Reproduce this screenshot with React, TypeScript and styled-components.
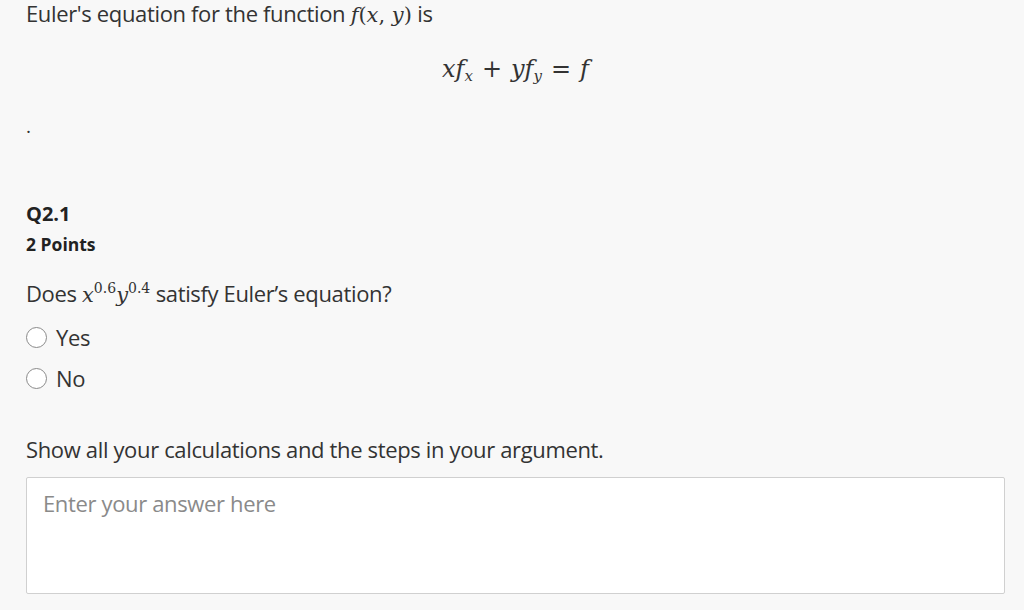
import styled, { createGlobalStyle } from 'styled-components';

const GlobalStyle = createGlobalStyle`
  html, body {
    margin: 0;
    padding: 0;
    background: #f8f8f8;
  }
  body {
    font-family: "Open Sans", "Noto Sans", sans-serif;
    color: #333;
  }
`;

const Page = styled.div`
  padding: 0 19px 0 26px;
  width: 1024px;
  box-sizing: border-box;
`;

const Prompt = styled.p`
  margin: 0;
  font-size: 22px;
  letter-spacing: -0.35px;
  line-height: 30px;
`;

const Lead = styled(Prompt)`
  line-height: 26px;
`;

const M = styled.span<{ $size?: number }>`
  font-family: "DejaVu Serif", "Liberation Serif", serif;
  font-style: italic;
  font-size: ${(p) => p.$size ?? 21}px;
  letter-spacing: 0;
`;

const Up = styled.span<{ $size?: number }>`
  font-family: "DejaVu Serif", "Liberation Serif", serif;
  font-style: normal;
  font-size: ${(p) => p.$size ?? 21}px;
  letter-spacing: 0;
`;

const Op = styled(Up)`
  padding: 0 9px;
`;

const Sub = styled.sub`
  font-size: 15px;
  vertical-align: -4px;
`;

const Sup = styled.sup`
  font-family: "DejaVu Serif", "Liberation Serif", serif;
  font-style: normal;
  font-size: 14px;
  letter-spacing: 0;
  vertical-align: 9px;
`;

const Display = styled.div`
  text-align: center;
  margin: 25px 0 0;
  line-height: 32px;
`;

const Dot = styled.div`
  margin-top: 24px;
  font-size: 19px;
  line-height: 20px;
`;

const QTitle = styled.h3`
  margin: 65px 0 0;
  font-size: 20px;
  font-weight: 700;
  line-height: 26px;
  color: #222;
`;

const Points = styled.div`
  font-size: 17.5px;
  font-weight: 700;
  line-height: 22px;
  margin-top: 6px;
  color: #222;
`;

const Question = styled(Prompt)`
  margin-top: 18px;
`;

const Options = styled.div`
  display: flex;
  flex-direction: column;
  gap: 11px;
  margin-top: 12px;
`;

const Option = styled.label`
  display: flex;
  align-items: center;
  gap: 9px;
  font-size: 22px;
  letter-spacing: -0.35px;
  line-height: 30px;
`;

const Radio = styled.span`
  width: 19px;
  height: 19px;
  border-radius: 50%;
  border: 1px solid #8a8a8a;
  background: #fff;
  box-sizing: content-box;
`;

const Instruction = styled(Prompt)`
  margin-top: 41px;
`;

const Answer = styled.textarea`
  display: block;
  margin-top: 13px;
  width: 100%;
  height: 117px;
  box-sizing: border-box;
  border: 1px solid #d0d0d0;
  border-radius: 2px;
  background: #fff;
  padding: 10px 16px;
  font-family: "Open Sans", "Noto Sans", sans-serif;
  font-size: 22px;
  letter-spacing: -0.35px;
  resize: none;
  &::placeholder {
    color: #8a8a8a;
  }
`;

export default function App() {
  return (
    <Page>
      <GlobalStyle />
      <Lead>
        Euler's equation for the function <M>f</M><Up>(</Up><M>x</M><Up>, </Up><M>y</M><Up>)</Up> is
      </Lead>
      <Display>
        <M $size={24}>xf</M><M $size={24}><Sub>x</Sub></M>
        <Op $size={24}>+</Op>
        <M $size={24}>yf</M><M $size={24}><Sub>y</Sub></M>
        <Op $size={24}>=</Op>
        <M $size={24}>f</M>
      </Display>
      <Dot>.</Dot>
      <QTitle>Q2.1</QTitle>
      <Points>2 Points</Points>
      <Question>
        Does <M>x</M><Sup>0.6</Sup><M>y</M><Sup>0.4</Sup> satisfy Euler’s equation?
      </Question>
      <Options>
        <Option><Radio />Yes</Option>
        <Option><Radio />No</Option>
      </Options>
      <Instruction>Show all your calculations and the steps in your argument.</Instruction>
      <Answer placeholder="Enter your answer here" />
    </Page>
  );
}
